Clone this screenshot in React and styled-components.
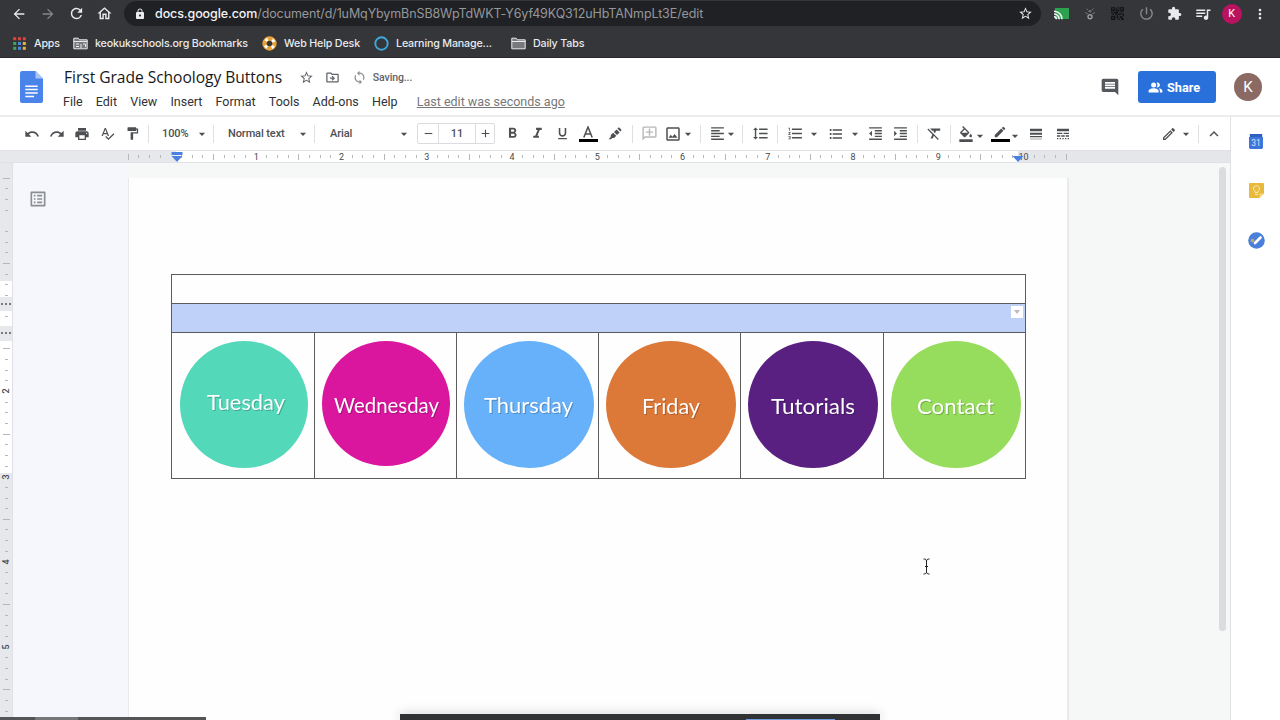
import React from "react";
import styled, { createGlobalStyle } from "styled-components";
import {
  MdAdd,
  MdArrowBack,
  MdArrowDropDown,
  MdArrowForward,
  MdComment,
  MdExtension,
  MdFormatAlignLeft,
  MdFormatBold,
  MdFormatClear,
  MdFormatColorFill,
  MdFormatIndentDecrease,
  MdFormatIndentIncrease,
  MdFormatItalic,
  MdFormatLineSpacing,
  MdFormatListBulleted,
  MdFormatListNumbered,
  MdFormatPaint,
  MdFormatUnderlined,
  MdKeyboardArrowUp,
  MdLineStyle,
  MdLineWeight,
  MdLock,
  MdModeEdit,
  MdMoreVert,
  MdOutlineAddComment,
  MdOutlineDriveFileMove,
  MdOutlineEdit,
  MdOutlineHome,
  MdOutlineImage,
  MdOutlineListAlt,
  MdPeopleAlt,
  MdPowerSettingsNew,
  MdPrint,
  MdQrCode2,
  MdQueueMusic,
  MdRedo,
  MdRefresh,
  MdRemove,
  MdSpellcheck,
  MdStarBorder,
  MdSync,
  MdUndo,
} from "react-icons/md";

const GlobalStyle = createGlobalStyle`
  body {
    margin: 0;
    background: #fff;
    font-family: Roboto, "Liberation Sans", sans-serif;
  }
  * {
    box-sizing: border-box;
  }
  svg {
    display: block;
    flex-shrink: 0;
  }
`;

const Screen = styled.div`
  position: relative;
  display: flex;
  flex-direction: column;
  width: 1280px;
  height: 720px;
  overflow: hidden;
  white-space: nowrap;
`;

/* browser */

const Browser = styled.div`
  height: 58px;
  flex-shrink: 0;
  background: #35363a;
  color: #e8eaed;
  font-family: Inter, "Liberation Sans", sans-serif;
  border-bottom: 1px solid #27282b;
`;

const BrowserRow = styled.div`
  display: flex;
  align-items: center;
  height: 27px;
  padding-left: 5px;
`;

const NavButton = styled.div`
  display: flex;
  justify-content: center;
  width: 28.5px;
  color: ${(props) => (props.$muted ? "#85868a" : "#e8eaed")};
`;

const AddressBar = styled.div`
  display: flex;
  align-items: center;
  width: 917px;
  height: 25px;
  margin-left: 5px;
  padding: 0 8px 0 10px;
  border-radius: 13px;
  background: #202124;
`;

const Url = styled.div`
  flex: 1;
  margin-left: 9px;
  font-size: 12.5px;
  letter-spacing: -0.1px;
  color: #94979b;
`;

const Host = styled.span`
  color: #f1f3f4;
  font-weight: 500;
`;

const Extensions = styled.div`
  display: flex;
  margin-left: 6px;
`;

const Extension = styled.div`
  display: flex;
  align-items: center;
  justify-content: center;
  width: 28.4px;
  height: 20px;
  color: ${(props) => props.$color || "#e8eaed"};
`;

const Avatar = styled.div`
  display: flex;
  align-items: center;
  justify-content: center;
  flex-shrink: 0;
  width: ${(props) => props.$size}px;
  height: ${(props) => props.$size}px;
  border-radius: 50%;
  background: ${(props) => props.$color};
  color: #fff;
  font-family: Roboto, sans-serif;
  font-size: ${(props) => props.$size * 0.54}px;
`;

const Bookmarks = styled.div`
  display: flex;
  align-items: center;
  height: 30px;
  padding: 2px 0 0 12px;
`;

const Bookmark = styled.div`
  display: flex;
  align-items: center;
  gap: 7px;
  width: ${(props) => props.$width}px;
  font-size: 10.7px;
  font-weight: 500;
  letter-spacing: -0.16px;
`;

/* document header */

const Header = styled.header`
  display: flex;
  align-items: center;
  height: 59px;
  flex-shrink: 0;
  padding: 1px 18px 0 20px;
  border-bottom: 2px solid #ebecee;
`;

const HeaderMain = styled.div`
  flex: 1;
  margin-left: 21px;
  padding-top: 4px;
`;

const TitleRow = styled.div`
  display: flex;
  align-items: center;
  height: 24px;
  color: #5f6368;
`;

const Title = styled.div`
  width: 219px;
  margin-right: 10px;
  font-family: "Open Sans", sans-serif;
  font-size: 15.6px;
  letter-spacing: -0.04px;
  color: #17181a;
`;

const Saving = styled.span`
  font-size: 10.5px;
  font-weight: 500;
  letter-spacing: -0.1px;
`;

const TitleIcon = styled.span`
  display: flex;
  justify-content: center;
  width: 26.6px;
`;

const MenuRow = styled.nav`
  display: flex;
  align-items: center;
  height: 24px;
  margin-left: -1px;
  gap: 13.2px;
  font-size: 12.5px;
  color: #303134;
`;

const LastEdit = styled.span`
  margin-left: 6px;
  color: #767779;
  text-decoration: underline;
`;

const ShareButton = styled.div`
  display: flex;
  align-items: center;
  width: 78px;
  height: 32px;
  margin: 0 18px 0 18px;
  padding-left: 10px;
  gap: 4px;
  border-radius: 3px;
  background: #2a70db;
  color: #fff;
  font-size: 12.7px;
  font-weight: 700;
`;

/* toolbar */

const Body = styled.div`
  display: flex;
  flex: 1;
  min-height: 0;
`;

const Editor = styled.div`
  display: flex;
  flex-direction: column;
  width: 1230px;
`;

const ToolbarRow = styled.div`
  display: flex;
  align-items: center;
  height: 33px;
  flex-shrink: 0;
  padding: 0 6px 0 22px;
  color: #4d4f52;
`;

const Tool = styled.div`
  display: flex;
  flex-direction: column;
  align-items: center;
  justify-content: center;
  width: 20px;
  height: 24px;
  flex-shrink: 0;
  margin-left: ${(props) => props.$gap ?? 5}px;
`;

const Caret = styled(MdArrowDropDown)`
  width: 12px;
  height: 16px;
  margin-left: ${(props) => props.$gap || 0}px;
  margin-top: ${(props) => props.$drop || 0}px;
  transform: scale(1.25);
`;

const AddCommentIcon = styled(MdOutlineAddComment)`
  opacity: 0.4;
  transform: scaleX(-1);
`;

const Divider = styled.div`
  width: 1px;
  height: 18px;
  flex-shrink: 0;
  margin-left: ${(props) => props.$gap ?? 6}px;
  background: #dfe0e3;
`;

const ToolText = styled.div`
  width: ${(props) => props.$width}px;
  margin-left: ${(props) => props.$gap}px;
  flex-shrink: 0;
  font-size: 11px;
  font-weight: 500;
  letter-spacing: -0.1px;
`;

const Swatch = styled.div`
  width: 19px;
  height: 3px;
  background: #000;
`;

const SizeBox = styled.div`
  display: grid;
  grid-template-columns: 20px 37px 19px;
  width: 78px;
  height: 21px;
  flex-shrink: 0;
  margin-left: 7px;
  border: 1px solid #dadce0;
  border-radius: 2px;
`;

const SizeCell = styled.div`
  display: flex;
  align-items: center;
  justify-content: center;
  font-size: 11px;
  font-weight: 500;
  & + & {
    border-left: 1px solid #dadce0;
  }
`;

const Spacer = styled.div`
  flex: 1;
`;

/* rulers */

const HRuler = styled.div`
  position: relative;
  display: flex;
  height: 13px;
  flex-shrink: 0;
  padding-left: 123px;
  overflow: hidden;
  border-top: 1px solid #dfe1e5;
  border-bottom: 1px solid #dfe1e5;
  background: linear-gradient(
    90deg,
    #e6e8ec 176px,
    #fff 176px,
    #fff 1018px,
    #e4e6e9 1018px
  );
`;

const HTick = styled.div`
  display: flex;
  align-items: center;
  justify-content: center;
  width: 10.667px;
  flex-shrink: 0;
  font-size: 9px;
  color: #47494c;
  &::before {
    content: "";
    display: ${(props) => (props.$label ? "none" : "block")};
    width: 1px;
    height: ${(props) => (props.$tall ? 6 : 3)}px;
    background: #b4b7bb;
  }
`;

const Indent = styled.svg`
  position: absolute;
  top: 1px;
  left: ${(props) => props.$left}px;
`;

const VRuler = styled.div`
  display: flex;
  flex-direction: column;
  width: 13px;
  flex-shrink: 0;
  padding-top: 10px;
  overflow: hidden;
  border-right: 1px solid #dfe1e5;
  background: linear-gradient(
    #e6e8ec 118px,
    #fff 118px,
    #fff 134px,
    #e6e8ec 134px,
    #e6e8ec 148px,
    #fff 148px,
    #fff 163px,
    #e6e8ec 163px,
    #e6e8ec 178px,
    #fff 178px,
    #fff 310px,
    #e6e8ec 310px
  );
`;

const VTick = styled.div`
  display: flex;
  align-items: center;
  justify-content: center;
  height: 10.667px;
  flex-shrink: 0;
  font-size: 9px;
  font-weight: 500;
  color: #47494c;
  &::before {
    content: "";
    display: ${(props) => (props.$label ? "none" : "block")};
    width: ${(props) => (props.$tall ? 7 : 3)}px;
    height: 1px;
    background: #b4b7bb;
  }
`;

const VLabel = styled.span`
  transform: rotate(-90deg);
`;

const Grip = styled.span`
  width: 10px;
  height: 2px;
  transform: translateY(${(props) => props.$lift}px);
  background: repeating-linear-gradient(
    90deg,
    #77797d 0 2px,
    transparent 2px 4px
  );
`;

/* workspace */

const Workspace = styled.div`
  display: flex;
  flex: 1;
  min-height: 0;
  background: #f6f8f8;
`;

const Outline = styled.div`
  width: 115px;
  flex-shrink: 0;
  padding: 26px 0 0 15px;
  background: #f6f7fc;
  color: #8b8e92;
`;

const Page = styled.div`
  width: 941px;
  flex-shrink: 0;
  margin-top: 15px;
  padding: 96px 0 0 43px;
  border: solid #e8eaed;
  border-width: 0 2px 0 1px;
  background: #fefefe;
`;

const Table = styled.div`
  display: grid;
  grid-template-columns: 142px 141px 141px 141px 142px 141px;
  grid-template-rows: 28px 28px 145px;
  gap: 1px;
  width: 855px;
  padding: 1px;
  margin-left: -1px;
  background: #5b5b5d;
`;

const WideCell = styled.div`
  grid-column: 1 / -1;
  display: flex;
  justify-content: flex-end;
  padding: 2px 2px 0 0;
  background: ${(props) => (props.$selected ? "#bfd1f8" : "#fefefe")};
`;

const CellMenu = styled.div`
  display: flex;
  align-items: center;
  justify-content: center;
  width: 12px;
  height: 12px;
  background: #fff;
`;

const ButtonCell = styled.div`
  padding: 8px 0 0 ${(props) => props.$inset}px;
  background: #fefefe;
`;

const ButtonText = styled.text`
  font-family: Lato, sans-serif;
  font-size: 21.5px;
  fill: #fff;
  filter: drop-shadow(1px 1px 0.5px rgba(0, 0, 0, 0.22));
`;

const Scrollbar = styled.div`
  width: 7px;
  height: 464px;
  margin: 4px 4px 0 auto;
  border-radius: 4px;
  background: #dadce0;
`;

const SidePanel = styled.aside`
  display: flex;
  flex-direction: column;
  align-items: center;
  gap: 34px;
  width: 50px;
  padding: 17px 0 0 1px;
  border-left: 1px solid #dfe1e5;
  background: #fff;
`;

/* things floating over the page */

const TextCursor = styled.svg`
  position: absolute;
  left: 922px;
  top: 558px;
`;

const StatusStrip = styled.div`
  position: absolute;
  left: 0;
  bottom: 0;
  width: 206px;
  height: 3px;
  background: linear-gradient(
    90deg,
    #555558 35px,
    #77777a 35px,
    #77777a 78px,
    #555558 78px
  );
`;

const DockEdge = styled.div`
  position: absolute;
  left: 400px;
  bottom: 0;
  width: 480px;
  height: 6px;
  padding: 5px 0 0 346px;
  background: #303234;
  box-shadow: 0 0 12px rgba(0, 0, 0, 0.22);
`;

const DockAccent = styled.div`
  width: 89px;
  height: 1px;
  background: #6f9ce0;
`;

const FolderIcon = ({ lined }) => (
  <svg width="15" height="13" viewBox="0 0 15 13" fill="none" stroke="#e8eaed">
    <path d="M.8 11.8V1.2h4.4l1.2 1.6h7.8v9z" fill="#77797d" />
    <path d="M.8 4.5h13.4" />
    {lined && <path d="M3 7h3M3 9.5h3M8 7v4M10 7h2.5v3" />}
  </svg>
);

const LifebuoyIcon = () => (
  <svg width="15" height="15" viewBox="0 0 15 15" fill="none">
    <circle cx="7.5" cy="7.5" r="5" stroke="#e9a23b" strokeWidth="4.4" />
    <circle
      cx="7.5"
      cy="7.5"
      r="4.6"
      stroke="#fff"
      strokeWidth="3"
      strokeDasharray="2.6 4.626"
      strokeDashoffset="-2.3"
    />
  </svg>
);

const RingIcon = () => (
  <svg width="15" height="15" viewBox="0 0 15 15" fill="none">
    <circle cx="7.5" cy="7.5" r="6.2" stroke="#3fa9dc" strokeWidth="1.9" />
  </svg>
);

const APP_COLORS = [
  "#d9453c", "#d9453c", "#d9453c",
  "#3fa757", "#4a86e0", "#e9b23b",
  "#3fa757", "#4a86e0", "#e9b23b",
];

const AppsIcon = () => (
  <svg width="15" height="15" viewBox="0 0 15 15">
    {APP_COLORS.map((color, i) => (
      <rect
        key={i}
        x={1.2 + (i % 3) * 4.8}
        y={1.2 + Math.floor(i / 3) * 4.8}
        width="3"
        height="3"
        fill={color}
      />
    ))}
  </svg>
);

const CastIcon = () => (
  <svg width="15" height="12" viewBox="0 0 15 12">
    <path d="M1 0h14v11H1z" fill="#2ca14f" />
    <path
      d="M0 3.2a8 8 0 0 1 8 8M0 6a5.2 5.2 0 0 1 5.2 5.2M0 8.8a2.4 2.4 0 0 1 2.4 2.4"
      stroke="#f4f6f4"
      strokeWidth="1.6"
      fill="none"
    />
  </svg>
);

const RobotIcon = () => (
  <svg width="12" height="14" viewBox="0 0 12 14" fill="none">
    <path d="M2.5 1.5l2 2M9.5 1.5l-2 2M1 5.5l3 1.5M11 5.5L8 7" stroke="#6f7175" />
    <circle cx="6" cy="4.2" r="1.3" fill="#6f7175" />
    <circle cx="6" cy="9.8" r="2" stroke="#9a9ca0" strokeWidth="1.4" />
  </svg>
);

const DocsLogo = () => (
  <svg width="23" height="32" viewBox="0 0 23 32">
    <path d="M2 0h13.5L23 7.6V30a2 2 0 0 1-2 2H2a2 2 0 0 1-2-2V2a2 2 0 0 1 2-2z" fill="#4a83ea" />
    <path d="M15.5 0L23 7.6h-7.5z" fill="#a9c6f7" />
    <path d="M5.3 15.2h12.4M5.3 18.6h12.4M5.3 22h12.4M5.3 25.4h8.8" stroke="#fff" strokeWidth="1.5" />
  </svg>
);

const HighlighterIcon = () => (
  <svg width="14" height="14" viewBox="0 0 14 14" fill="currentColor">
    <path d="M9.4 1.6l1.5-1.4 2.8 2.8-1.4 1.5zM8.6 2.4l3 3-2.6 2.6-3-3zM5.2 5.7l3.1 3.1-2.2 2.1H4.2L3 12.2H.6l2.2-2.4V8.1z" />
  </svg>
);

const CalendarIcon = () => (
  <svg width="14" height="15" viewBox="0 0 14 15">
    <path d="M.8 0h12.4v3H.8z" fill="#2f5fc0" />
    <path d="M0 3h14v10.5L13 15H1l-1-1.5z" fill="#3f74da" />
    <text x="7" y="12" fontSize="8.5" textAnchor="middle" fill="#dce7fc">
      31
    </text>
  </svg>
);

const KeepIcon = () => (
  <svg width="15" height="15" viewBox="0 0 15 15">
    <path d="M1 0h13a1 1 0 0 1 1 1v9.5L10.5 15H1a1 1 0 0 1-1-1V1a1 1 0 0 1 1-1z" fill="#e8b93a" />
    <path d="M15 10.5L10.5 15v-4.500z" fill="#f4d984" />
    <path d="M6 9.4V8.3a3 3 0 1 1 3 0v1.1zM6 11.3h3" fill="none" stroke="#f9ecc0" />
  </svg>
);

const TasksIcon = () => (
  <svg width="17" height="17" viewBox="0 0 17 17" fill="none">
    <circle cx="8.5" cy="8.5" r="8.3" fill="#4a7fdc" />
    <circle cx="4.4" cy="8.6" r="1.8" fill="#c3a86b" />
    <path d="M7 11l5.5-5.5" stroke="#fff" strokeWidth="2.6" strokeLinecap="round" />
  </svg>
);

const TextColorIcon = () => (
  <svg width="14" height="13" viewBox="0 0 14 13" fill="none" stroke="currentColor" strokeWidth="1.5">
    <path d="M2.8 11.5L7 1l4.2 10.5M4.2 8h5.6" />
  </svg>
);

const BUTTONS = [
  { label: "Tuesday", color: "#53d8ba", w: 128, h: 127, x: 27, y: 69, len: 78, inset: 8 },
  { label: "Wednesday", color: "#da169e", w: 128, h: 125, x: 12, y: 72, len: 105, inset: 7 },
  { label: "Thursday", color: "#66b1f9", w: 130, h: 127, x: 20, y: 72, len: 89, inset: 7 },
  { label: "Friday", color: "#dd7938", w: 130, h: 127, x: 36, y: 73, len: 58, inset: 7 },
  { label: "Tutorials", color: "#592081", w: 130, h: 127, x: 23, y: 73, len: 84, inset: 7 },
  { label: "Contact", color: "#97dd5d", w: 130, h: 127, x: 26, y: 73, len: 77, inset: 7 },
];

const MENUS = ["File", "Edit", "View", "Insert", "Format", "Tools", "Add-ons", "Help"];

const DayButton = ({ label, color, w, h, x, y, len }) => (
  <svg width={w} height={h}>
    <ellipse cx={w / 2} cy={h / 2} rx={w / 2} ry={h / 2} fill={color} />
    <ButtonText x={x} y={y} textLength={len} lengthAdjust="spacingAndGlyphs">
      {label}
    </ButtonText>
  </svg>
);

const BrowserChrome = () => (
  <Browser>
    <BrowserRow>
      <NavButton><MdArrowBack size={16} /></NavButton>
      <NavButton $muted><MdArrowForward size={16} /></NavButton>
      <NavButton><MdRefresh size={17} /></NavButton>
      <NavButton><MdOutlineHome size={17} /></NavButton>
      <AddressBar>
        <MdLock size={12} />
        <Url>
          <Host>docs.google.com</Host>
          /document/d/1uMqYbymBnSB8WpTdWKT-Y6yf49KQ312uHbTANmpLt3E/edit
        </Url>
        <MdStarBorder size={15} />
      </AddressBar>
      <Extensions>
        <Extension><CastIcon /></Extension>
        <Extension><RobotIcon /></Extension>
        <Extension $color="#111214"><MdQrCode2 size={17} /></Extension>
        <Extension $color="#88898c"><MdPowerSettingsNew size={17} /></Extension>
        <Extension><MdExtension size={15} /></Extension>
        <Extension><MdQueueMusic size={18} /></Extension>
        <Extension><Avatar $size={20} $color="#b9125f">K</Avatar></Extension>
        <Extension><MdMoreVert size={16} /></Extension>
      </Extensions>
    </BrowserRow>
    <Bookmarks>
      <Bookmark $width={61}><AppsIcon />Apps</Bookmark>
      <Bookmark $width={189}><FolderIcon lined />keokukschools.org Bookmarks</Bookmark>
      <Bookmark $width={112}><LifebuoyIcon />Web Help Desk</Bookmark>
      <Bookmark $width={137}><RingIcon />Learning Manage...</Bookmark>
      <Bookmark $width={90}><FolderIcon />Daily Tabs</Bookmark>
    </Bookmarks>
  </Browser>
);

const DocHeader = () => (
  <Header>
    <DocsLogo />
    <HeaderMain>
      <TitleRow>
        <Title>First Grade Schoology Buttons</Title>
        <TitleIcon><MdStarBorder size={15} /></TitleIcon>
        <TitleIcon><MdOutlineDriveFileMove size={15} /></TitleIcon>
        <TitleIcon><MdSync size={15} opacity={0.7} /></TitleIcon>
        <Saving>Saving...</Saving>
      </TitleRow>
      <MenuRow>
        {MENUS.map((menu) => (
          <span key={menu}>{menu}</span>
        ))}
        <LastEdit>Last edit was seconds ago</LastEdit>
      </MenuRow>
    </HeaderMain>
    <MdComment size={20} color="#55585c" />
    <ShareButton>
      <MdPeopleAlt size={15} />
      Share
    </ShareButton>
    <Avatar $size={28} $color="#8a6a62">K</Avatar>
  </Header>
);

const Toolbar = () => (
  <ToolbarRow>
    <Tool $gap={0}><MdUndo size={16} /></Tool>
    <Tool><MdRedo size={16} /></Tool>
    <Tool><MdPrint size={16} /></Tool>
    <Tool><MdSpellcheck size={15} /></Tool>
    <Tool><MdFormatPaint size={15} /></Tool>
    <Divider />
    <ToolText $gap={13} $width={34}>100%</ToolText>
    <Caret />
    <Divider $gap={5} />
    <ToolText $gap={14} $width={69}>Normal text</ToolText>
    <Caret />
    <Divider $gap={5} />
    <ToolText $gap={15} $width={68}>Arial</ToolText>
    <Caret />
    <SizeBox>
      <SizeCell><MdRemove size={13} /></SizeCell>
      <SizeCell>11</SizeCell>
      <SizeCell><MdAdd size={13} /></SizeCell>
    </SizeBox>
    <Tool $gap={7}><MdFormatBold size={17} /></Tool>
    <Tool><MdFormatItalic size={17} /></Tool>
    <Tool><MdFormatUnderlined size={15} /></Tool>
    <Tool $gap={6}>
      <TextColorIcon />
      <Swatch />
    </Tool>
    <Tool $gap={7}><HighlighterIcon /></Tool>
    <Divider $gap={7} />
    <Tool $gap={6}><AddCommentIcon size={17} /></Tool>
    <Tool $gap={4}><MdOutlineImage size={18} /></Tool>
    <Caret $gap={-1} />
    <Divider />
    <Tool $gap={6}><MdFormatAlignLeft size={17} /></Tool>
    <Caret $gap={-2} />
    <Divider $gap={5} />
    <Tool $gap={7}><MdFormatLineSpacing size={17} /></Tool>
    <Divider $gap={7} />
    <Tool $gap={7}><MdFormatListNumbered size={17} /></Tool>
    <Caret $gap={3} />
    <Tool $gap={6}><MdFormatListBulleted size={16} /></Tool>
    <Caret $gap={3} />
    <Tool $gap={4}><MdFormatIndentDecrease size={17} /></Tool>
    <Tool><MdFormatIndentIncrease size={17} /></Tool>
    <Divider $gap={7} />
    <Tool $gap={6}><MdFormatClear size={17} /></Tool>
    <Divider />
    <Tool><MdFormatColorFill size={16} /></Tool>
    <Caret $gap={-2} $drop={4} />
    <Tool $gap={4}>
      <MdModeEdit size={14} />
      <Swatch />
    </Tool>
    <Caret $gap={-1} $drop={4} />
    <Tool><MdLineWeight size={16} /></Tool>
    <Tool $gap={7}><MdLineStyle size={16} /></Tool>
    <Spacer />
    <Tool><MdOutlineEdit size={16} /></Tool>
    <Caret $gap={1} />
    <Divider />
    <Tool><MdKeyboardArrowUp size={18} /></Tool>
  </ToolbarRow>
);

const HorizontalRuler = () => (
  <HRuler>
    {Array.from({ length: 89 }, (_, i) => {
      const eighth = i - 4;
      const label = eighth > 0 && eighth % 8 === 0 ? eighth / 8 : null;
      if (eighth === 0) return <HTick key={i} $label />;
      return (
        <HTick key={i} $label={label} $tall={eighth % 4 === 0}>
          {label}
        </HTick>
      );
    })}
    <Indent $left={171} width="12" height="10" viewBox="0 0 12 10">
      <path d="M.5 0h11v3H.5zM.5 4h11L6 10z" fill="#4a80e0" />
    </Indent>
    <Indent $left={1012} width="12" height="10" viewBox="0 0 12 10">
      <path d="M.5 4h11L6 10z" fill="#4a80e0" />
    </Indent>
  </HRuler>
);

// the table's row handles cover these marks of the vertical ruler
const ROW_GRIPS = { 8: -2, 11: -5 };

const VerticalRuler = () => (
  <VRuler>
    {Array.from({ length: 52 }, (_, i) => {
      const eighth = i - 4;
      const label = eighth > 8 && eighth % 8 === 0 ? eighth / 8 : null;
      if (eighth === 0) return <VTick key={i} $label />;
      if (ROW_GRIPS[eighth]) {
        return (
          <VTick key={i} $label>
            <Grip $lift={ROW_GRIPS[eighth]} />
          </VTick>
        );
      }
      return (
        <VTick key={i} $label={label || eighth === 10} $tall={eighth % 4 === 0}>
          {label && <VLabel>{label}</VLabel>}
        </VTick>
      );
    })}
  </VRuler>
);

const App = () => (
  <Screen>
    <GlobalStyle />
    <BrowserChrome />
    <DocHeader />
    <Body>
      <Editor>
        <Toolbar />
        <HorizontalRuler />
        <Workspace>
          <VerticalRuler />
          <Outline>
            <MdOutlineListAlt size={20} />
          </Outline>
          <Page>
            <Table>
              <WideCell />
              <WideCell $selected>
                <CellMenu>
                  <svg width="6" height="4" viewBox="0 0 6 4">
                    <path d="M0 0h6L3 4z" fill="#b9bcc2" />
                  </svg>
                </CellMenu>
              </WideCell>
              {BUTTONS.map(({ inset, ...button }) => (
                <ButtonCell key={button.label} $inset={inset}>
                  <DayButton {...button} />
                </ButtonCell>
              ))}
            </Table>
          </Page>
          <Scrollbar />
        </Workspace>
      </Editor>
      <SidePanel>
        <CalendarIcon />
        <KeepIcon />
        <TasksIcon />
      </SidePanel>
    </Body>
    <TextCursor width="9" height="17" viewBox="0 0 9 17" fill="none" stroke="#222">
      <path d="M1.5 1c2 0 3 .6 3 2v11c0 1.4-1 2-3 2M7.5 1c-2 0-3 .6-3 2v11c0 1.4 1 2 3 2M3 8.5h3" />
    </TextCursor>
    <StatusStrip />
    <DockEdge>
      <DockAccent />
    </DockEdge>
  </Screen>
);

export default App;
